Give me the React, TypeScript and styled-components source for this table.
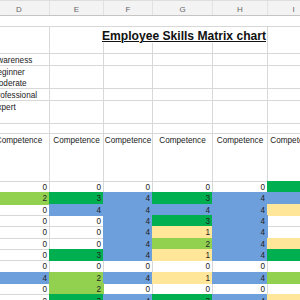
import React from 'react';
import styled, { createGlobalStyle, css } from 'styled-components';

const GRID = '#d8d8d8';
const COLS = '61px 54px 49px 60px 55px 52px';

const Global = createGlobalStyle`
  html, body { margin: 0; padding: 0; background: #fff; overflow: hidden; }
  body { font-family: "Liberation Sans", Arial, sans-serif; }
`;

const Viewport = styled.div`
  width: 300px;
  height: 300px;
  overflow: hidden;
  background: #fff;
`;

const Sheet = styled.div`
  display: flex;
  flex-direction: column;
  width: 331px;
  margin-left: -11px;
`;

const Row = styled.div<{ $h: number }>`
  display: grid;
  grid-template-columns: ${COLS};
  height: ${(p) => p.$h}px;
  flex: none;
`;

const HeaderRow = styled(Row)`
  background: #f3f3f3;
  border-top: 1px solid #dedede;
  border-bottom: 1px solid #c4c4c4;
  box-sizing: border-box;
`;

const HeaderCell = styled.div`
  border-right: 1px solid #e2e2e2;
  display: flex;
  align-items: center;
  justify-content: center;
  padding-top: 3px;
  box-sizing: border-box;
  font-size: 8px;
  color: #666;
`;

const PlainRow = styled.div<{ $h: number }>`
  height: ${(p) => p.$h}px;
  border-bottom: 1px solid ${GRID};
  box-sizing: border-box;
  flex: none;
`;

const Cell = styled.div<{ $fill?: string; $align?: 'left' | 'right' | 'center'; $top?: boolean }>`
  box-sizing: border-box;
  min-width: 0;
  display: flex;
  align-items: ${(p) => (p.$top ? 'flex-start' : 'center')};
  justify-content: ${(p) =>
    p.$align === 'right' ? 'flex-end' : p.$align === 'center' ? 'center' : 'flex-start'};
  padding: ${(p) => (p.$top ? '3px 0 0' : p.$align === 'left' ? '3px 2px 0 3px' : '2px 2px 0 3px')};
  white-space: nowrap;
  overflow: visible;
  font-size: 8.2px;
  line-height: 1;
  color: #222;
  border-right: 1px solid ${(p) => p.$fill ?? GRID};
  border-bottom: 1px solid ${(p) => p.$fill ?? GRID};
  background: ${(p) => p.$fill ?? '#fff'};
  ${(p) =>
    p.$fill &&
    css`
      box-shadow: -1px 0 0 ${p.$fill}, 0 -1px 0 ${p.$fill}, -1px -1px 0 ${p.$fill};
    `}
`;

const TitleCell = styled.div`
  grid-column: 2 / 6;
  box-sizing: border-box;
  border-right: 1px solid ${GRID};
  border-bottom: 1px solid ${GRID};
  display: flex;
  align-items: center;
  justify-content: flex-end;
  padding: 2px 1px 0 0;
  white-space: nowrap;
`;

const Title = styled.span`
  font-size: 12.1px;
  font-weight: bold;
  color: #111;
  text-decoration: underline;
  text-underline-offset: 1px;
  text-decoration-thickness: 1px;
`;

const FILLS: Record<number, string | undefined> = {
  0: undefined,
  1: '#ffe699',
  2: '#92d050',
  3: '#00b050',
  4: '#6d9fdc',
};

const LETTERS = ['D', 'E', 'F', 'G', 'H', 'I'];
const LEVELS = ['Awareness', 'Beginner', 'Moderate', 'Professional', 'Expert'];
const LEVEL_HEIGHTS = [12, 11, 12, 12, 11];

const DATA: number[][] = [
  [0, 0, 0, 0, 0, 3],
  [2, 3, 4, 3, 4, 4],
  [0, 4, 4, 4, 4, 1],
  [0, 0, 4, 3, 4, 0],
  [0, 0, 4, 1, 4, 0],
  [0, 0, 4, 2, 4, 1],
  [0, 3, 4, 1, 4, 3],
  [0, 0, 0, 0, 0, 0],
  [4, 2, 4, 1, 4, 2],
  [0, 2, 0, 0, 0, 0],
  [0, 3, 4, 3, 4, 1],
];

const EmptyRow: React.FC<{ h: number }> = ({ h }) => (
  <Row $h={h}>
    {LETTERS.map((l) => (
      <Cell key={l} />
    ))}
  </Row>
);

export default function App() {
  return (
    <Viewport>
      <Global />
      <Sheet>
        <HeaderRow $h={16}>
          {LETTERS.map((l) => (
            <HeaderCell key={l}>{l}</HeaderCell>
          ))}
        </HeaderRow>
        <PlainRow $h={11} />
        <Row $h={16}>
          <Cell />
          <TitleCell>
            <Title>Employee Skills Matrix chart</Title>
          </TitleCell>
          <Cell />
        </Row>
        <EmptyRow h={11} />
        {LEVELS.map((lvl, i) => (
          <Row key={lvl} $h={LEVEL_HEIGHTS[i]}>
            <Cell $align="left">{lvl}</Cell>
            {LETTERS.slice(1).map((l) => (
              <Cell key={l} />
            ))}
          </Row>
        ))}
        <EmptyRow h={12} />
        <EmptyRow h={10} />
        <Row $h={48}>
          {LETTERS.map((l) => (
            <Cell key={l} $align="center" $top>
              Competence
            </Cell>
          ))}
        </Row>
        {DATA.map((row, r) => (
          <Row key={r} $h={11.35}>
            {row.map((v, c) => (
              <Cell key={c} $align="right" $fill={FILLS[v]}>
                {v}
              </Cell>
            ))}
          </Row>
        ))}
      </Sheet>
    </Viewport>
  );
}
